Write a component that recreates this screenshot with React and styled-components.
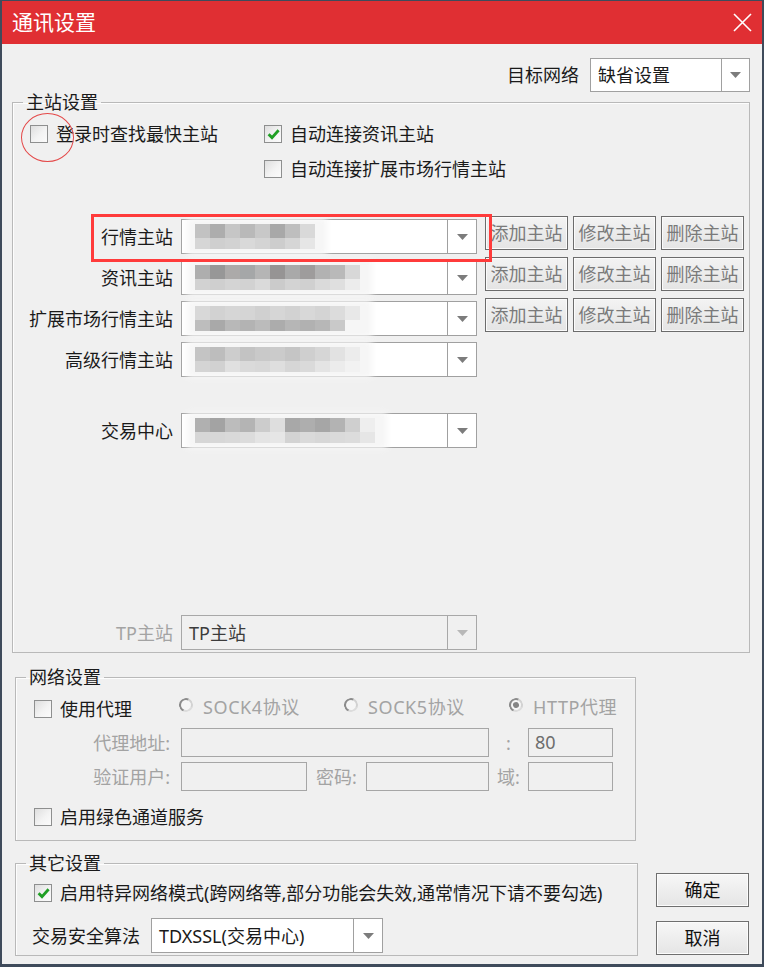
import React from 'react';
import styled, { createGlobalStyle } from 'styled-components';

const FONT = `"Noto Sans", "Noto Sans CJK SC", sans-serif`;

const GlobalStyle = createGlobalStyle`
  html, body {
    margin: 0;
    padding: 0;
    background: #f0f0f0;
  }
  body {
    font-family: ${FONT};
  }
`;

const Window = styled.div`
  position: relative;
  width: 764px;
  height: 967px;
  box-sizing: border-box;
  background: #f0f0f0;
  border: solid #3f4b5b;
  border-width: 1px 2px 3px 2px;
  display: flex;
  flex-direction: column;
  font-family: ${FONT};
  font-size: 18px;
  color: #1a1a1a;
  overflow: hidden;
`;

const TitleBar = styled.div`
  flex: none;
  height: 43px;
  background: #e02f33;
  display: flex;
  align-items: center;
  justify-content: space-between;
  padding: 0 10px 0 10px;
  color: #fff;
`;

const Title = styled.div`
  font-size: 21px;
  line-height: 26px;
  margin-top: -1px;
`;

const TopRow = styled.div`
  display: flex;
  justify-content: flex-end;
  align-items: center;
  gap: 11px;
  margin-top: 14px;
  padding-right: 12px;
  line-height: 22px;
`;

const Group = styled.fieldset`
  margin: ${({ $margin }) => $margin};
  padding: ${({ $padding }) => $padding};
  border: 1px solid #b9b9b9;
  box-shadow: inset 1px 1px 0 #fdfdfd;
  min-width: 0;
  width: ${({ $width }) => ($width ? `${$width}px` : 'auto')};
  box-sizing: border-box;
  flex: none;
`;

const Legend = styled.legend`
  margin-left: 10px;
  padding: 0 3px;
  font-size: 18px;
  line-height: 20px;
  color: #1a1a1a;
`;

const CheckGrid = styled.div`
  display: grid;
  grid-template-columns: 234px auto;
  row-gap: 13px;
  padding: 11px 0 0 17px;
`;

const CheckItem = styled.label`
  display: flex;
  align-items: center;
  gap: 8px;
  height: 22px;
  line-height: 22px;
  white-space: nowrap;
  grid-column: ${({ $col }) => $col || 'auto'};
`;

const Box = styled.span`
  width: 18px;
  height: 18px;
  box-sizing: border-box;
  border: 1px solid #8e8f8f;
  background: linear-gradient(135deg, #dedede 0%, #f3f3f3 55%, #fbfbfb 100%);
  display: flex;
  align-items: center;
  justify-content: center;
  flex: none;
`;

const Stations = styled.div`
  display: flex;
  flex-direction: column;
  gap: 6px;
  margin-top: 39px;
`;

const StationRow = styled.div`
  display: flex;
  align-items: flex-start;
  margin-top: ${({ $gap }) => $gap || 0}px;
`;

const RowLabel = styled.div`
  width: 160px;
  margin-right: 8px;
  text-align: right;
  line-height: 22px;
  align-self: center;
  white-space: nowrap;
  color: ${({ $disabled }) => ($disabled ? '#a3a3a3' : '#1a1a1a')};
`;

const SelectBox = styled.div`
  width: ${({ $width }) => $width}px;
  height: ${({ $height }) => $height || 35}px;
  box-sizing: border-box;
  border: 1px solid ${({ $disabled }) => ($disabled ? '#a8a8a8' : '#a0a0a0')};
  background: ${({ $disabled }) => ($disabled ? '#f0f0f0' : '#fff')};
  display: flex;
  flex: none;
`;

const SelectValue = styled.div`
  flex: 1;
  display: flex;
  align-items: center;
  padding-left: ${({ $pad }) => $pad || 7}px;
  line-height: 22px;
  white-space: nowrap;
  color: ${({ $disabled }) => ($disabled ? '#3c3c3c' : '#1a1a1a')};
`;

const SelectArrow = styled.div`
  width: ${({ $w }) => $w || 27}px;
  border-left: 1px solid ${({ $disabled }) => ($disabled ? '#a8a8a8' : '#a0a0a0')};
  display: flex;
  align-items: center;
  justify-content: center;
  flex: none;
`;

const ButtonGroup = styled.div`
  display: flex;
  gap: 5px;
  margin-left: 8px;
  margin-top: -3px;
`;

const SideButton = styled.button`
  width: 83px;
  height: 34px;
  padding: 0;
  box-sizing: border-box;
  border: 1px solid #6c6c6c;
  box-shadow: inset 0 0 0 1px #fbfbfb;
  background: linear-gradient(#f3f3f3, #e4e4e4);
  font-family: ${FONT};
  font-size: 18px;
  line-height: 22px;
  color: #7a7a7a;
`;

const NetRow = styled.div`
  display: flex;
  align-items: ${({ $align }) => $align || 'center'};
  margin-top: ${({ $top }) => $top || 0}px;
  padding-left: ${({ $left }) => $left || 0}px;
`;

const Radio = styled.span`
  width: 14px;
  height: 14px;
  margin-bottom: 5px;
  box-sizing: border-box;
  border-radius: 50%;
  border: 2px solid;
  border-color: #8c8c8c #d2d2d2 #dcdcdc #8c8c8c;
  transform: rotate(-20deg);
  background: #f6f6f6;
  display: flex;
  align-items: center;
  justify-content: center;
  flex: none;
  &::after {
    content: '';
    width: 6px;
    height: 6px;
    border-radius: 50%;
    background: ${({ $on }) => ($on ? '#858585' : 'transparent')};
  }
`;

const RadioItem = styled.div`
  width: ${({ $width }) => ($width ? `${$width}px` : 'auto')};
  display: flex;
  align-items: center;
  gap: 10px;
  height: 18px;
  line-height: 18px;
  color: #a3a3a3;
  letter-spacing: 0.6px;
  white-space: nowrap;
`;

const FieldLabel = styled.div`
  width: ${({ $width }) => $width}px;
  margin-right: ${({ $mr }) => $mr || 0}px;
  text-align: ${({ $align }) => $align || 'right'};
  color: #a3a3a3;
  line-height: 22px;
  white-space: nowrap;
`;

const TextBox = styled.div`
  width: ${({ $width }) => $width}px;
  height: 29px;
  box-sizing: border-box;
  border: 1px solid #a6a6a6;
  background: #f0f0f0;
  padding-left: 6px;
  line-height: 27px;
  color: #6d6d6d;
  flex: none;
`;

const BottomRow = styled.div`
  display: flex;
  margin: 12px 0 0 13px;
`;

const ActionColumn = styled.div`
  display: flex;
  flex-direction: column;
  gap: 14px;
  margin: 20px 0 0 18px;
`;

const ActionButton = styled.button`
  width: 93px;
  height: 34px;
  padding: 0;
  box-sizing: border-box;
  border: 1px solid #6f6f6f;
  box-shadow: inset 0 0 0 1px #fcfcfc;
  background: linear-gradient(#f7f7f7, #e5e5e5);
  font-family: ${FONT};
  font-size: 18px;
  line-height: 22px;
  color: #111;
`;

const AlgoLabel = styled.div`
  margin-right: 11px;
  line-height: 22px;
  white-space: nowrap;
`;

const RedCircle = styled.div`
  position: absolute;
  left: 19px;
  top: 112px;
  width: 53px;
  height: 49px;
  box-sizing: border-box;
  border: 1px solid #e44848;
  border-radius: 50%;
  pointer-events: none;
`;

const RedFrame = styled.div`
  position: absolute;
  left: 89px;
  top: 213px;
  width: 401px;
  height: 48px;
  box-sizing: border-box;
  border: 3px solid #ff3b3b;
  pointer-events: none;
`;

const Check = ({ on }) => (
  <Box>
    {on && (
      <svg width="13" height="12" viewBox="0 0 13 12">
        <path d="M1.6 6.2 L5 9.6 L11.6 2.2" fill="none" stroke="#1f9f24" strokeWidth="2.8" />
      </svg>
    )}
  </Box>
);

const Arrow = ({ disabled }) => (
  <svg width="11" height="6" viewBox="0 0 11 6">
    <path d="M0 0 H11 L5.5 6 Z" fill={disabled ? '#b8b8b8' : '#7c7c7c'} />
  </svg>
);

const CloseIcon = () => (
  <svg width="19" height="19" viewBox="0 0 19 19">
    <path d="M1 1 L18 18 M18 1 L1 18" stroke="#fff" strokeWidth="1.6" fill="none" />
  </svg>
);

const Mosaic = ({ top, bottom }) => {
  const w = Math.max(top.length, bottom.length) * 15;
  return (
    <svg width={w} height="25" viewBox={`0 0 ${w} 25`} style={{ overflow: 'visible', marginLeft: 6 }}>
      <defs>
        <filter id="soft" x="-20%" y="-60%" width="140%" height="220%">
          <feGaussianBlur stdDeviation="3" />
        </filter>
      </defs>
      <rect x="-8" y="-6" width={w + 20} height="37" fill="#f6f6f6" filter="url(#soft)" />
      {top.map((c, i) => (
        <rect key={`t${i}`} x={i * 15} y="0" width="15" height="14" fill={c} />
      ))}
      {bottom.map((c, i) => (
        <rect key={`b${i}`} x={i * 15} y="14" width="15" height="11" fill={c} />
      ))}
    </svg>
  );
};

const Select = ({ width, height, value, disabled, arrowWidth, children }) => (
  <SelectBox $width={width} $height={height} $disabled={disabled}>
    <SelectValue $disabled={disabled}>{children || value}</SelectValue>
    <SelectArrow $disabled={disabled} $w={arrowWidth}>
      <Arrow disabled={disabled} />
    </SelectArrow>
  </SelectBox>
);

const stations = [
  {
    label: '行情主站',
    buttons: true,
    top: ['#c2c2c2', '#adadad', '#c6c6c6', '#b9b9b9', '#c8c8c8', '#a8a8a8', '#bebebe', '#d9d9d9'],
    bottom: ['#d6d6d6', '#cfcfcf', '#d2d2d2', '#d9d9d9', '#d4d4d4', '#cdcdcd', '#d6d6d6', '#e6e6e6'],
  },
  {
    label: '资讯主站',
    buttons: true,
    top: ['#aeaeae', '#979797', '#acaaa9', '#a5a7a8', '#b5b5b5', '#969494', '#a9a9a9', '#9e9c9c', '#b2b2b2', '#b9b9b9', '#d8d8d8'],
    bottom: ['#d2d2d2', '#cfcfcf', '#d4d4d4', '#d2d2d2', '#dadada', '#cbcbcb', '#d3d3d3', '#d0d0d0', '#dadada', '#dfdfdf', '#ececec'],
  },
  {
    label: '扩展市场行情主站',
    buttons: true,
    top: ['#d8d8d8', '#d2d2d2', '#d6d6d6', '#d5d5d5', '#d0d0d0', '#d6d6d6', '#d2d2d2', '#d8d8d8', '#d4d4d4', '#dcdcdc', '#e8e8e8'],
    bottom: ['#bdbdbd', '#a9a9a9', '#b8b8b8', '#b3b3b3', '#bbbbbb', '#acacac', '#b6b6b6', '#b1b1b1', '#b7b7b7', '#c9c9c9'],
  },
  {
    label: '高级行情主站',
    top: ['#c4c4c4', '#bdbdbd', '#cdcdcd', '#c3c3c3', '#c9c9c9', '#cbcbcb', '#c5c5c5', '#cfcfcf', '#d6d6d6', '#e2e2e2', '#ececec'],
    bottom: ['#d4d4d4', '#d1d1d1', '#e0e0e0', '#dadada', '#d8d8d8', '#dedede', '#d6d6d6', '#dadada', '#e4e4e4', '#ececec', '#f2f2f2'],
  },
  {
    label: '交易中心',
    gap: 30,
    top: ['#b0b0b0', '#a3a3a3', '#bcbcbc', '#b4b4b4', '#cccccc', '#dedede', '#a8a8a8', '#aeaeae', '#a6a6a6', '#b3b3b3', '#cfcfcf', '#eeeeee'],
    bottom: ['#d6d6d6', '#d7d7d7', '#d9d9d9', '#dcdcdc', '#e4e4e4', '#e6e6e6', '#d3d3d3', '#dadada', '#d7d7d7', '#dadada', '#dcdcdc', '#e6e6e6'],
  },
  { label: 'TP主站', value: 'TP主站', disabled: true, gap: 161 },
];

const App = () => {
  return (
    <>
      <GlobalStyle />
      <Window>
        <TitleBar>
          <Title>通讯设置</Title>
          <CloseIcon />
        </TitleBar>

        <TopRow>
          <span>目标网络</span>
          <Select width={160} height={34} value="缺省设置" />
        </TopRow>

        <Group $margin="0 12px 0 10px" $padding="0 0 2px 0">
          <Legend>主站设置</Legend>
          <CheckGrid>
            <CheckItem>
              <Check />
              登录时查找最快主站
            </CheckItem>
            <CheckItem>
              <Check on />
              自动连接资讯主站
            </CheckItem>
            <CheckItem $col="2">
              <Check />
              自动连接扩展市场行情主站
            </CheckItem>
          </CheckGrid>

          <Stations>
            {stations.map((s) => (
              <StationRow key={s.label} $gap={s.gap}>
                <RowLabel $disabled={s.disabled}>{s.label}</RowLabel>
                <Select width={296} disabled={s.disabled} arrowWidth={28} value={s.value}>
                  {s.top && <Mosaic top={s.top} bottom={s.bottom} />}
                </Select>
                {s.buttons && (
                  <ButtonGroup>
                    <SideButton>添加主站</SideButton>
                    <SideButton>修改主站</SideButton>
                    <SideButton>删除主站</SideButton>
                  </ButtonGroup>
                )}
              </StationRow>
            ))}
          </Stations>
        </Group>

        <Group $margin="14px 126px 0 13px" $padding="11px 0 12px 0">
          <Legend>网络设置</Legend>
          <NetRow $left={18} $align="flex-start">
            <CheckItem style={{ width: 145 }}>
              <Check />
              使用代理
            </CheckItem>
            <RadioItem $width={165}>
              <Radio />
              SOCK4协议
            </RadioItem>
            <RadioItem $width={165}>
              <Radio />
              SOCK5协议
            </RadioItem>
            <RadioItem>
              <Radio $on />
              HTTP代理
            </RadioItem>
          </NetRow>
          <NetRow $top={8}>
            <FieldLabel $width={154} $mr={11}>代理地址:</FieldLabel>
            <TextBox $width={308} />
            <FieldLabel $width={39} $align="center">:</FieldLabel>
            <TextBox $width={85}>80</TextBox>
          </NetRow>
          <NetRow $top={5}>
            <FieldLabel $width={154} $mr={11}>验证用户:</FieldLabel>
            <TextBox $width={126} />
            <FieldLabel $width={59} $align="center">密码:</FieldLabel>
            <TextBox $width={123} />
            <FieldLabel $width={39} $align="center">域:</FieldLabel>
            <TextBox $width={85} />
          </NetRow>
          <NetRow $top={15} $left={18}>
            <CheckItem>
              <Check />
              启用绿色通道服务
            </CheckItem>
          </NetRow>
        </Group>

        <BottomRow>
          <Group $margin="0" $padding="9px 0 2px 0" $width={623}>
            <Legend>其它设置</Legend>
            <NetRow $left={18}>
              <CheckItem>
                <Check on />
                启用特异网络模式(跨网络等,部分功能会失效,通常情况下请不要勾选)
              </CheckItem>
            </NetRow>
            <NetRow $top={14} $left={16}>
              <AlgoLabel>交易安全算法</AlgoLabel>
              <Select width={232} arrowWidth={28} value="TDXSSL(交易中心)" />
            </NetRow>
          </Group>
          <ActionColumn>
            <ActionButton>确定</ActionButton>
            <ActionButton>取消</ActionButton>
          </ActionColumn>
        </BottomRow>

        <RedCircle />
        <RedFrame />
      </Window>
    </>
  );
};

export default App;
